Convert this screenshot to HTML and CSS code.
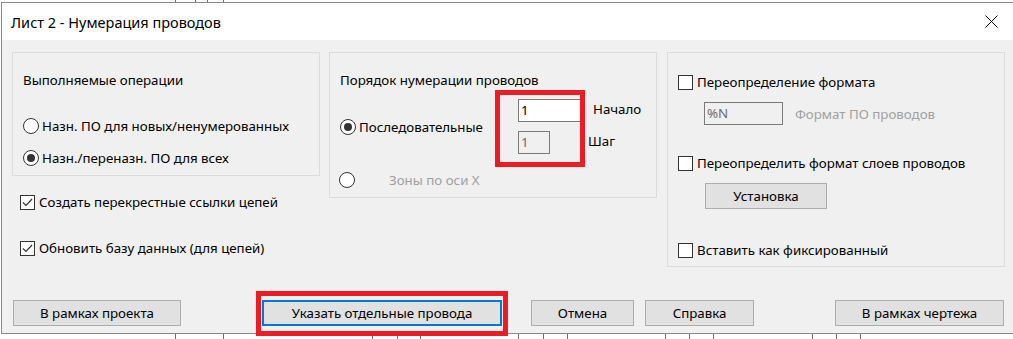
FILE: index.html
```html
<!DOCTYPE html>
<html lang="ru">
<head>
    <meta charset="UTF-8">
    <title>Лист 2 - Нумерация проводов</title>
    <link rel="stylesheet" href="styles.css">
</head>
<body>
    <div class="strip strip-top"><span></span><span></span><span></span><span></span><span></span></div>

    <div class="window">
        <div class="titlebar">
            <span class="title">Лист 2 - Нумерация проводов</span>
            <svg class="close" width="13" height="13" viewBox="0 0 13 13">
                <path d="M0.5 0.5 L12.5 12.5 M12.5 0.5 L0.5 12.5" stroke="#000" stroke-width="1" fill="none"/>
            </svg>
        </div>

        <div class="content">
            <div class="panels">
                <!-- левая колонка -->
                <div class="col-ops">
                    <div class="group group-ops">
                        <div class="group-label">Выполняемые операции</div>
                        <div class="option opt-new"><span class="radio"></span>Назн. ПО для новых/ненумерованных</div>
                        <div class="option opt-all"><span class="radio checked"></span>Назн./переназн. ПО для всех</div>
                    </div>
                    <div class="option check-xref">
                        <span class="check"><svg width="13" height="13" viewBox="0 0 13 13"><path d="M2 6.5 L5 9.5 L11 3" stroke="#333" stroke-width="1.2" fill="none"/></svg></span>Создать перекрестные ссылки цепей
                    </div>
                    <div class="option check-db">
                        <span class="check"><svg width="13" height="13" viewBox="0 0 13 13"><path d="M2 6.5 L5 9.5 L11 3" stroke="#333" stroke-width="1.2" fill="none"/></svg></span>Обновить базу данных (для цепей)
                    </div>
                </div>

                <!-- порядок нумерации -->
                <div class="group group-order">
                    <div class="group-label">Порядок нумерации проводов</div>
                    <div class="order-row">
                        <div class="option opt-seq"><span class="radio checked"></span>Последовательные</div>
                        <div class="fields">
                            <div class="field-row">
                                <span class="input input-start">1</span>
                                <span class="field-label label-start">Начало</span>
                            </div>
                            <div class="field-row row-step">
                                <span class="input input-step disabled">1</span>
                                <span class="field-label label-step">Шаг</span>
                            </div>
                            <div class="mark mark-fields"></div>
                        </div>
                    </div>
                    <div class="option opt-zones"><span class="radio"></span><span class="muted">Зоны по оси X</span></div>
                </div>

                <!-- формат -->
                <div class="group group-format">
                    <div class="option"><span class="check"></span>Переопределение формата</div>
                    <div class="fmt-row">
                        <span class="input input-fmt disabled">%N</span>
                        <span class="muted fmt-label">Формат ПО проводов</span>
                    </div>
                    <div class="option check-layers"><span class="check"></span>Переопределить формат слоев проводов</div>
                    <button class="btn btn-setup">Установка</button>
                    <div class="option check-fixed"><span class="check"></span>Вставить как фиксированный</div>
                </div>
            </div>

            <div class="actions">
                <button class="btn btn-project">В рамках проекта</button>
                <div class="btn-wrap">
                    <button class="btn btn-pick focused">Указать отдельные провода</button>
                    <div class="mark mark-pick"></div>
                </div>
                <button class="btn btn-cancel">Отмена</button>
                <button class="btn btn-help">Справка</button>
                <button class="btn btn-drawing">В рамках чертежа</button>
            </div>
        </div>
    </div>

    <div class="strip strip-bottom">
        <span></span><span></span><span></span><span></span><span></span>
        <span></span><span></span><span></span><span></span><span></span>
        <span></span><span></span><span></span><span></span><span></span>
    </div>
</body>
</html>
```

FILE: styles.css
```css
body {
    margin: 0;
    background: #fff;
    font-family: "Noto Sans", "Liberation Sans", Arial, sans-serif;
    font-size: 13.3px;
    color: #000;
    overflow: hidden;
}

/* фон под окном */
.strip {
    display: grid;
}
.strip span + span {
    border-left: 1px solid #707070;
}
.strip-top {
    height: 2px;
    grid-template-columns: 175px 20px 12px 16px 1fr;
}
.strip-bottom {
    height: 5px;
    grid-template-columns: 175px 48px 149px 25px 23px 98px 25px 24px 98px 24px 24px 99px 24px 24px 1fr;
}

.window {
    margin-left: 1px;
    border: 1px solid #8a8a8a;
    border-right: none;
    background: #f0f0f0;
    position: relative;
}
.titlebar {
    height: 37px;
    background: #fff;
    display: flex;
    align-items: center;
    padding: 0 15px 0 9px;
}
.title {
    flex: 1;
    font-size: 14.5px;
}

.content {
    height: 293px;
    box-sizing: border-box;
    padding: 12px 0 0 10px;
}
.panels {
    display: flex;
    align-items: flex-start;
}
.group {
    border: 1px solid #dcdcdc;
    box-sizing: border-box;
}
.group-label {
    line-height: 16px;
}
.option {
    display: flex;
    align-items: center;
    height: 18px;
    line-height: 16px;
    white-space: nowrap;
}
.radio {
    width: 16px;
    height: 16px;
    flex: none;
    box-sizing: border-box;
    border: 1px solid #333;
    border-radius: 50%;
    background: #fff;
    margin-right: 3px;
    display: flex;
    align-items: center;
    justify-content: center;
}
.radio.checked::after {
    content: "";
    width: 8px;
    height: 8px;
    border-radius: 50%;
    background: #333;
}
.check {
    width: 15px;
    height: 15px;
    flex: none;
    box-sizing: border-box;
    border: 1px solid #333;
    background: #fff;
    margin-right: 4px;
    display: flex;
    align-items: center;
    justify-content: center;
}
.muted {
    color: #a0a0a0;
}

/* выполняемые операции */
.col-ops {
    width: 308px;
}
.group-ops {
    height: 124px;
    padding: 19px 0 0 10px;
}
.opt-new {
    margin-top: 29px;
}
.opt-all {
    margin-top: 14px;
}
.check-xref {
    margin: 17px 0 0 8px;
}
.check-db {
    margin: 28px 0 0 8px;
}

/* порядок нумерации */
.group-order {
    width: 328px;
    height: 146px;
    margin-left: 9px;
    padding: 19px 0 0 10px;
}
.order-row {
    display: flex;
    align-items: center;
    margin-top: 11px;
}
.opt-seq {
    width: 178px;
}
.fields {
    position: relative;
}
.field-row {
    display: flex;
    align-items: center;
    height: 23px;
}
.row-step {
    margin-top: 9px;
}
.input {
    height: 23px;
    box-sizing: border-box;
    border: 1px solid #7a7a7a;
    background: #fff;
    padding-left: 2px;
    line-height: 21px;
}
.input.disabled {
    background: #f0f0f0;
    color: #6d6d6d;
}
.input-start {
    width: 66px;
}
.input-step {
    width: 32px;
    color: #8a8a8a;
}
.field-label {
    margin-bottom: 4px;
}
.label-start {
    margin-left: 9px;
}
.label-step {
    margin-left: 38px;
}
.opt-zones {
    margin-top: 17px;
}
.opt-zones .radio {
    margin: 0 34px 0 -1px;
}

/* формат */
.group-format {
    width: 338px;
    height: 215px;
    margin-left: 10px;
    padding: 20px 0 0 10px;
}
.fmt-row {
    display: flex;
    align-items: center;
    margin: 11px 0 0 26px;
}
.input-fmt {
    width: 79px;
}
.fmt-label {
    margin-left: 12px;
}
.check-layers {
    margin-top: 29px;
}
.check-fixed {
    margin-top: 32px;
}

/* кнопки */
.btn {
    height: 26px;
    box-sizing: border-box;
    border: 1px solid #adadad;
    background: #e1e1e1;
    font-family: inherit;
    font-size: 13.3px;
    color: #000;
    padding: 0;
}
.btn.focused {
    border: 2px solid #0078d7;
}
.btn-setup {
    display: block;
    width: 122px;
    margin: 11px 0 0 27px;
}
.actions {
    display: flex;
    margin: 33px 0 0 1px;
}
.btn-project {
    width: 168px;
}
.btn-wrap {
    position: relative;
    margin-left: 81px;
}
.btn-pick {
    display: block;
    width: 240px;
}
.btn-cancel {
    width: 103px;
    margin-left: 29px;
}
.btn-help {
    width: 109px;
    margin-left: 11px;
}
.btn-drawing {
    width: 169px;
    margin-left: 81px;
}

/* красные рамки-пометки */
.mark {
    position: absolute;
    border: 5px solid #ed1c24;
    box-sizing: border-box;
    pointer-events: none;
    z-index: 1;
}
.mark-fields {
    left: -23px;
    top: -9px;
    width: 90px;
    height: 77px;
}
.mark-pick {
    left: -6px;
    top: -9px;
    width: 252px;
    height: 45px;
}
```
